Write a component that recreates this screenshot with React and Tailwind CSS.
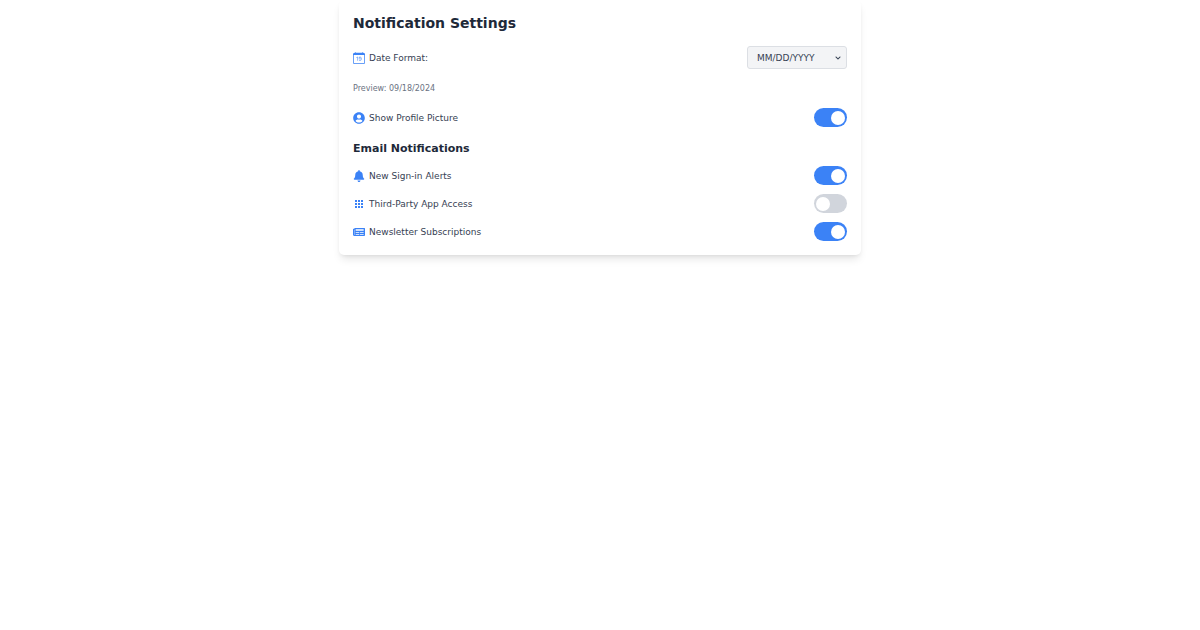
import React, { useState } from "react";
import { FaBell, FaChevronDown, FaNewspaper, FaUserCircle } from "react-icons/fa";
import { BsCalendarDate } from "react-icons/bs";
import { MdApps } from "react-icons/md";

const previews = {
  "MM/DD/YYYY": "09/18/2024",
  "DD/MM/YYYY": "18/09/2024",
  "YYYY/MM/DD": "2024/09/18",
};

const ToggleRow = ({ id, icon: Icon, label, checked, onChange }) => (
  <div className="flex items-center justify-between">
    <label htmlFor={id} className="flex items-center gap-1 text-gray-700">
      <Icon className="h-3 w-3 text-[#3b82f6]" />
      {label}
    </label>
    <input
      id={id}
      type="checkbox"
      role="switch"
      checked={checked}
      onChange={(e) => onChange(e.target.checked)}
      className="flex h-[19px] w-[33px] cursor-pointer appearance-none items-center rounded-full bg-gray-300 px-[2px] transition-colors before:h-[14px] before:w-[14px] before:rounded-full before:bg-white checked:justify-end checked:bg-[#3b82f6]"
    />
  </div>
);

const App = () => {
  const [dateFormat, setDateFormat] = useState("MM/DD/YYYY");
  const [showPicture, setShowPicture] = useState(true);
  const [signIn, setSignIn] = useState(true);
  const [thirdParty, setThirdParty] = useState(false);
  const [newsletter, setNewsletter] = useState(true);

  return (
    <div className="pb-8">
      <div className="mx-auto max-w-[522px] rounded-[5px] bg-white p-[14px] font-['DejaVu_Sans',sans-serif] text-[9px] leading-[14px] shadow-[0_6px_9px_-2px_rgb(0_0_0/0.1),0_2px_4px_-2px_rgb(0_0_0/0.1)]">
        <h2 className="mb-[14px] text-[14px] leading-[18px] font-bold text-gray-800">
          Notification Settings
        </h2>

        {/* Date Format */}
        <div className="mb-[14px] flex items-center justify-between">
          <label htmlFor="date-format" className="flex items-center gap-1 text-gray-700">
            <BsCalendarDate className="h-3 w-3 text-[#3b82f6]" />
            Date Format:
          </label>
          <div className="relative">
            <select
              id="date-format"
              value={dateFormat}
              onChange={(e) => setDateFormat(e.target.value)}
              className="block h-[23px] w-[100px] appearance-none rounded-[3px] border border-[#dcdfe4] bg-gray-100 pl-[9px] text-gray-700"
            >
              {Object.keys(previews).map((format) => (
                <option key={format} value={format}>
                  {format}
                </option>
              ))}
            </select>
            <FaChevronDown className="pointer-events-none absolute top-[9px] right-[6px] h-[6px] w-[6px] text-gray-700" />
          </div>
        </div>

        <p className="mb-[13px] text-[8px] leading-[12px] text-gray-500">
          Preview: {previews[dateFormat]}
        </p>

        <ToggleRow
          id="show-picture"
          icon={FaUserCircle}
          label="Show Profile Picture"
          checked={showPicture}
          onChange={setShowPicture}
        />

        {/* Email Notifications */}
        <h3 className="mt-[14px] mb-[9px] text-[11px] leading-[16px] font-bold text-gray-800">
          Email Notifications
        </h3>
        <div className="flex flex-col gap-[9px]">
          <ToggleRow
            id="sign-in"
            icon={FaBell}
            label="New Sign-in Alerts"
            checked={signIn}
            onChange={setSignIn}
          />
          <ToggleRow
            id="third-party"
            icon={MdApps}
            label="Third-Party App Access"
            checked={thirdParty}
            onChange={setThirdParty}
          />
          <ToggleRow
            id="newsletter"
            icon={FaNewspaper}
            label="Newsletter Subscriptions"
            checked={newsletter}
            onChange={setNewsletter}
          />
        </div>
      </div>
    </div>
  );
};

export default App;
